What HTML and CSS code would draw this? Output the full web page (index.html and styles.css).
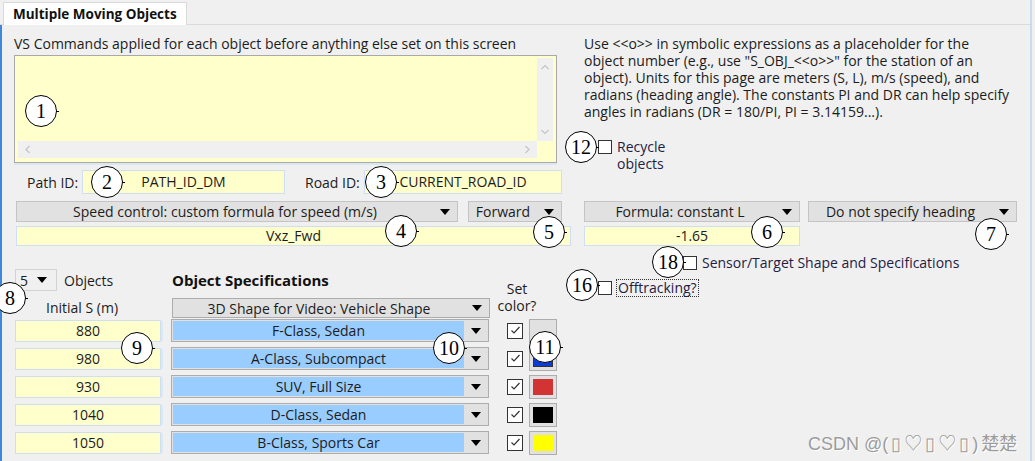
FILE: index.html
```html
<!DOCTYPE html>
<html>
<head>
<meta charset="utf-8">
<link rel="stylesheet" href="styles.css">
</head>
<body>
<div class="window">
  <div class="tabstrip"><div class="tab">Multiple Moving Objects</div></div>
  <div class="panel">
    <div class="left">
      <div class="vs">VS Commands applied for each object before anything else set on this screen</div>
      <div class="textarea">
        <div class="ta-fill"></div>
        <div class="vscroll">
          <svg width="16" height="10" viewBox="0 0 16 10"><polyline points="4.5,7 8,3.5 11.5,7" fill="none" stroke="#c4c4c4" stroke-width="1.2"/></svg>
          <svg width="16" height="10" viewBox="0 0 16 10"><polyline points="4.5,3 8,6.5 11.5,3" fill="none" stroke="#c4c4c4" stroke-width="1.2"/></svg>
        </div>
        <div class="hscroll">
          <svg width="12" height="17" viewBox="0 0 12 17"><polyline points="7.5,5 4,8.5 7.5,12" fill="none" stroke="#c4c4c4" stroke-width="1.2"/></svg>
          <svg width="12" height="17" viewBox="0 0 12 17"><polyline points="4.5,5 8,8.5 4.5,12" fill="none" stroke="#c4c4c4" stroke-width="1.2"/></svg>
        </div>
        <div class="corner"></div>
      </div>
      <div class="idrow">
        <span class="lbl lbl-path">Path ID:</span>
        <div class="field f-path">PATH_ID_DM</div>
        <span class="lbl lbl-road">Road ID:</span>
        <div class="field f-road">CURRENT_ROAD_ID</div>
      </div>
      <div class="ddrow">
        <div class="dd dd-speed"><span class="t">Speed control: custom formula for speed (m/s)</span><span class="a"></span></div>
        <div class="dd dd-fwd"><span class="t">Forward</span><span class="a"></span></div>
      </div>
      <div class="field f-vxz">Vxz_Fwd</div>

      <div class="objects">
        <div class="obj-head">
          <div class="col1">
            <div class="count"><div class="combo"><span>5</span><span class="a"></span></div><span class="objlbl">Objects</span></div>
            <div class="inits">Initial S (m)</div>
          </div>
          <div class="col2">
            <div class="spec-title">Object Specifications</div>
            <div class="dd dd-shape"><span class="t">3D Shape for Video: Vehicle Shape</span><span class="a sep"></span></div>
          </div>
          <div class="col3"><div>Set</div><div>color?</div></div>
        </div>

        <div class="obj-row first">
          <div class="field s-in">880</div>
          <div class="dd-obj"><span class="t">F-Class, Sedan</span><span class="a"></span></div>
          <div class="chk-col"><div class="cb checked"><svg width="13" height="13" viewBox="0 0 13 13"><polyline points="2.5,6.5 5,9 10.5,3" fill="none" stroke="#333" stroke-width="1.2"/></svg></div></div>
          <div class="swatch"><span class="sw-in c-none"></span></div>
        </div>
        <div class="obj-row">
          <div class="field s-in">980</div>
          <div class="dd-obj"><span class="t">A-Class, Subcompact</span><span class="a"></span></div>
          <div class="chk-col"><div class="cb checked"><svg width="13" height="13" viewBox="0 0 13 13"><polyline points="2.5,6.5 5,9 10.5,3" fill="none" stroke="#333" stroke-width="1.2"/></svg></div></div>
          <div class="swatch"><span class="sw-in c-blue"></span></div>
        </div>
        <div class="obj-row">
          <div class="field s-in">930</div>
          <div class="dd-obj"><span class="t">SUV, Full Size</span><span class="a"></span></div>
          <div class="chk-col"><div class="cb checked"><svg width="13" height="13" viewBox="0 0 13 13"><polyline points="2.5,6.5 5,9 10.5,3" fill="none" stroke="#333" stroke-width="1.2"/></svg></div></div>
          <div class="swatch"><span class="sw-in c-red"></span></div>
        </div>
        <div class="obj-row">
          <div class="field s-in">1040</div>
          <div class="dd-obj"><span class="t">D-Class, Sedan</span><span class="a"></span></div>
          <div class="chk-col"><div class="cb checked"><svg width="13" height="13" viewBox="0 0 13 13"><polyline points="2.5,6.5 5,9 10.5,3" fill="none" stroke="#333" stroke-width="1.2"/></svg></div></div>
          <div class="swatch"><span class="sw-in c-black"></span></div>
        </div>
        <div class="obj-row">
          <div class="field s-in">1050</div>
          <div class="dd-obj"><span class="t">B-Class, Sports Car</span><span class="a"></span></div>
          <div class="chk-col"><div class="cb checked"><svg width="13" height="13" viewBox="0 0 13 13"><polyline points="2.5,6.5 5,9 10.5,3" fill="none" stroke="#333" stroke-width="1.2"/></svg></div></div>
          <div class="swatch"><span class="sw-in c-yellow"></span></div>
        </div>
      </div>
    </div>

    <div class="right">
      <div class="note">Use &lt;&lt;o&gt;&gt; in symbolic expressions as a placeholder for the<br>object number (e.g., use "S_OBJ_&lt;&lt;o&gt;&gt;" for the station of an<br>object). Units for this page are meters (S, L), m/s (speed), and<br>radians (heading angle). The constants PI and DR can help specify<br>angles in radians (DR = 180/PI, PI = 3.14159...).</div>
      <div class="recycle"><div class="cb"></div><div class="cblbl two"><div>Recycle</div><div>objects</div></div></div>
      <div class="ddrow2">
        <div class="dd dd-formula"><span class="t">Formula: constant L</span><span class="a"></span></div>
        <div class="dd dd-heading"><span class="t">Do not specify heading</span><span class="a"></span></div>
      </div>
      <div class="field f-l">-1.65</div>
      <div class="sensor"><div class="cb"></div><span class="cblbl">Sensor/Target Shape and Specifications</span></div>
      <div class="offtrack"><div class="cb"></div><span class="cblbl focus">Offtracking?</span></div>
    </div>
  </div>
</div>

<div class="ann a1">1</div>
<div class="ann a2">2</div>
<div class="ann a3">3</div>
<div class="ann a4">4</div>
<div class="ann a5">5</div>
<div class="ann a6">6</div>
<div class="ann a7">7</div>
<div class="ann a8">8</div>
<div class="ann a9">9</div>
<div class="ann a10">10</div>
<div class="ann a11">11</div>
<div class="ann a12">12</div>
<div class="ann a16">16</div>
<div class="ann a18">18</div>

<div class="wm">CSDN @<span class="wm-face">(▯♡▯♡▯)</span>楚楚</div>
</body>
</html>
```

FILE: styles.css
```css
* { box-sizing: border-box; }
html, body { margin: 0; padding: 0; }
body {
  width: 1035px;
  height: 461px;
  overflow: hidden;
  background: #f0f0f0;
  font-family: "Open Sans", "Noto Sans", sans-serif;
  font-size: 14px;
  color: #1c1c1c;
  position: relative;
}
.window {
  width: 1032px;
  height: 461px;
  border-right: 2px solid #c9dcef;
  display: flex;
  flex-direction: column;
}
.tabstrip {
  flex: none;
  height: 25px;
  border-bottom: 1px solid #dadada;
  padding-left: 3px;
  display: flex;
  align-items: flex-end;
}
.tab {
  height: 23px;
  background: #fff;
  border: 1px solid #d9d9d9;
  border-bottom: none;
  margin-bottom: -1px;
  padding: 0 9px;
  font-weight: 700;
  font-size: 13.5px;
  line-height: 22px;
  color: #111;
}
.panel {
  flex: 1;
  display: flex;
  border-left: 2px solid #3d88d8;
  padding-left: 12px;
}
.left { width: 558px; flex: none; }
.right { margin-left: 12px; width: 433px; flex: none; }

.vs { margin-top: 10px; line-height: 17px; white-space: nowrap; }

.textarea {
  margin-top: 3px;
  width: 543px;
  height: 108px;
  border: 1px solid #a9a9a9;
  background: #ffffcc;
  padding: 2px 3px 4px 3px;
  display: grid;
  grid-template-columns: 1fr 16px;
  grid-template-rows: 1fr 17px;
  box-shadow: 0 2px 0 0 #dce7f2;
}
.vscroll {
  background: #f0f0f0;
  display: flex;
  flex-direction: column;
  justify-content: space-between;
  padding: 4px 0;
}
.hscroll {
  background: #f0f0f0;
  display: flex;
  justify-content: space-between;
  padding: 0 4px;
}

.idrow { margin-top: 7px; height: 24px; display: flex; align-items: center; }
.lbl { flex: none; white-space: nowrap; }
.lbl-path { width: 68px; padding-left: 13px; }
.lbl-road { width: 79px; padding-left: 20px; }
.field {
  background: #ffffcc;
  border: 1px solid #cddff1;
  text-align: center;
  flex: none;
  white-space: nowrap;
}
.f-path { width: 203px; height: 24px; line-height: 22px; }
.f-road { width: 198px; height: 24px; line-height: 22px; }

.ddrow { margin-top: 7px; display: flex; }
.dd {
  display: flex;
  align-items: center;
  background: #e1e1e1;
  border: 1px solid #c4c4c4;
  height: 21px;
  flex: none;
}
.dd .t { flex: 1; text-align: center; white-space: nowrap; }
.a { width: 24px; height: 100%; display: flex; align-items: center; justify-content: center; flex: none; }
.a::before {
  content: "";
  border-left: 5px solid transparent;
  border-right: 5px solid transparent;
  border-top: 6px solid #000;
}
.dd-speed { margin-left: 2px; width: 442px; }
.dd-fwd { margin-left: 10px; width: 94px; }
.f-vxz { margin-top: 4px; margin-left: 2px; width: 555px; height: 20px; line-height: 18px; }

.objects { margin-top: 22px; margin-left: 1px; }
.obj-head { display: flex; align-items: flex-end; height: 50px; }
.col1 { width: 157px; flex: none; }
.count { display: flex; align-items: center; height: 24px; }
.combo {
  width: 42px;
  height: 22px;
  border: 1px solid #d2d2d2;
  display: flex;
  align-items: center;
  padding-left: 4px;
}
.combo span:first-child { width: 14px; }
.combo .a { width: 16px; }
.objlbl { margin-left: 7px; }
.inits { margin-top: 6px; height: 20px; line-height: 20px; padding-left: 31px; white-space: nowrap; }
.col2 { width: 325px; flex: none; }
.spec-title { height: 24px; line-height: 24px; font-weight: 700; font-size: 15px; color: #111; }
.dd-shape { margin-top: 6px; width: 318px; height: 20px; border-color: #adadad; }
.col3 { width: 40px; flex: none; text-align: center; margin-bottom: 4px; }
.col3 div { height: 17px; line-height: 17px; }

.obj-row { display: flex; align-items: center; height: 23px; margin-top: 5px; }
.obj-row.first { margin-top: 1px; }
.s-in { width: 146px; height: 22px; line-height: 20px; margin-right: 10px; box-shadow: 3px 0 0 -1px #dde8f3; }
.dd-obj {
  width: 318px;
  height: 23px;
  border: 1px solid #adadad;
  background: #e1e1e1;
  display: flex;
  align-items: stretch;
}
.dd-obj .t {
  flex: 1;
  background: #99ccff;
  margin: 1px 0 1px 1px;
  text-align: center;
  line-height: 19px;
  white-space: nowrap;
}
.chk-col { width: 38px; display: flex; justify-content: flex-start; padding-left: 18px; }
.cb {
  width: 14px;
  height: 14px;
  border: 1px solid #333;
  background: #fff;
  flex: none;
  display: flex;
  align-items: center;
  justify-content: center;
}
.cb.checked { width: 16px; height: 16px; }
.swatch {
  width: 28px;
  height: 24px;
  border: 1px solid #adadad;
  background: #e1e1e1;
  padding: 3px;
  margin-left: 2px;
  display: flex;
}
.sw-in { flex: 1; }
.c-none { background: #e1e1e1; }
.c-blue { background: #0a3bd6; border: 1px solid #333; }
.c-red { background: #d23434; }
.c-black { background: #000; }
.c-yellow { background: #ffff00; }

.note { margin-top: 10px; line-height: 17px; white-space: nowrap; }
.recycle { margin-top: 18px; margin-left: 14px; display: flex; align-items: flex-start; }
.recycle .cb { margin-top: 2px; }
.cblbl { margin-left: 5px; line-height: 16px; color: #1f2045; white-space: nowrap; }
.cblbl.two div { height: 17px; line-height: 17px; }
.ddrow2 { margin-top: 29px; display: flex; gap: 8px; }
.dd-formula { width: 216px; }
.dd-heading { width: 209px; }
.f-l { margin-top: 4px; width: 216px; height: 20px; line-height: 18px; }
.sensor { margin-top: 9px; margin-left: 99px; display: flex; align-items: center; }
.offtrack { margin-top: 8px; margin-left: 14px; display: flex; align-items: center; }
.focus { border: 1px dotted #333; padding: 0 1px; margin-left: 4px; }

.ann {
  position: absolute;
  width: 32px;
  height: 32px;
  border: 1px solid #000;
  border-radius: 50%;
  background: #fff;
  font-family: "Liberation Serif", serif;
  font-size: 20px;
  line-height: 30px;
  text-align: center;
  color: #000;
}
.ann::after {
  content: "";
  position: absolute;
  right: -3px;
  top: 15px;
  width: 3px;
  height: 1px;
  background: #000;
}
.a1 { left: 25px; top: 95px; }
.a2 { left: 91px; top: 166px; }
.a3 { left: 365px; top: 166px; }
.a4 { left: 385px; top: 215px; }
.a5 { left: 533px; top: 216px; }
.a6 { left: 751px; top: 216px; }
.a7 { left: 975px; top: 218px; }
.a8 { left: -6px; top: 282px; }
.a9 { left: 121px; top: 332px; }
.a10 { left: 433px; top: 332px; }
.a11 { left: 529px; top: 331px; }
.a12 { left: 565px; top: 131px; }
.a16 { left: 566px; top: 269px; }
.a18 { left: 652px; top: 246px; }

.wm {
  position: absolute;
  left: 808px;
  top: 429px;
  font-family: "Liberation Sans", "Noto Sans CJK SC", sans-serif;
  font-size: 18px;
  color: #9c9c9c;
  text-shadow: 1px 1px 0 #ffffff;
  white-space: nowrap;
}
.wm-face { letter-spacing: 3px; }
```
